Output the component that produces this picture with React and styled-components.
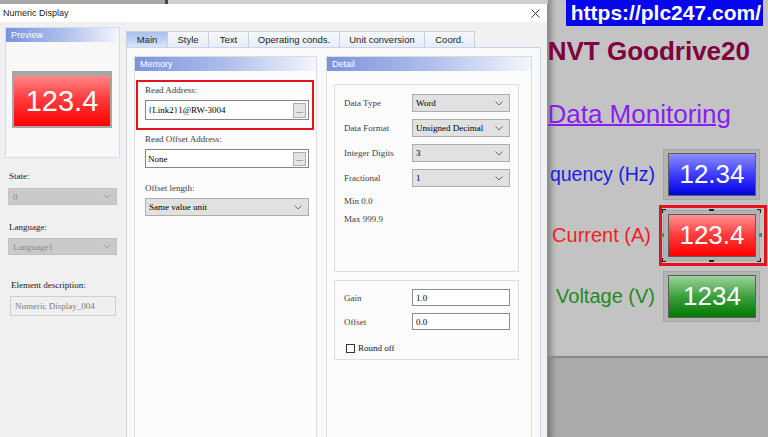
import React from 'react';
import styled, { createGlobalStyle, css } from 'styled-components';

const serif = `"Liberation Serif", "Times New Roman", serif`;
const sans = `"Liberation Sans", Arial, sans-serif`;

const GlobalStyle = createGlobalStyle`
  * { box-sizing: border-box; }
  html, body { margin: 0; padding: 0; }
  body { font-family: ${sans}; background: #c3c3c3; }
`;

const Desktop = styled.div`
  display: flex;
  width: 768px;
  height: 437px;
  overflow: hidden;
`;

/* ---------- dialog window ---------- */
const DialogColumn = styled.div`
  width: 548px;
  flex: none;
  display: flex;
  flex-direction: column;
`;

const BackdropStrip = styled.div`
  height: 4px;
  flex: none;
  background: linear-gradient(90deg, #a7a7a7 0, #a7a7a7 165px, #474747 165px, #474747 168px, #cfcfcf 168px);
`;

const Window = styled.div`
  flex: 1;
  min-height: 0;
  display: flex;
  flex-direction: column;
  background: #f1f1f1;
  border-right: 1px solid #8f8f8f;
`;

const TitleBar = styled.div`
  height: 18px;
  flex: none;
  display: flex;
  align-items: center;
  justify-content: space-between;
  padding: 0 7px 0 3px;
  background: #fff;
  font-size: 9px;
  color: #1b1b1b;
`;

const CloseIcon = styled.svg`
  display: block;
`;

const Body = styled.div`
  flex: 1;
  min-height: 0;
  display: flex;
`;

const SideColumn = styled.div`
  width: 125px;
  flex: none;
  display: flex;
  flex-direction: column;
  padding: 5px 0 0 5px;
  background: #f0f0f0;
`;

const PanelHeader = styled.div`
  height: 14px;
  flex: none;
  padding-left: 5px;
  line-height: 14px;
  font-size: 9px;
  color: #fff;
  background: linear-gradient(90deg, #7b93dc 0%, #aebeeb 50%, #f4f6fc 100%);
`;

const PreviewPanel = styled.div`
  width: 115px;
  height: 131px;
  display: flex;
  flex-direction: column;
  border: 1px solid #d2ddeb;
  background: #f8f8f8;
`;

const PreviewStage = styled.div`
  flex: 1;
  display: flex;
  align-items: center;
  justify-content: center;
  padding-right: 1px;
`;

const PreviewFrame = styled.div`
  width: 100px;
  height: 57px;
  display: flex;
  padding: 5px 2px 2px;
  background: #a6a6a6;
`;

const PreviewValue = styled.div`
  flex: 1;
  display: flex;
  align-items: center;
  justify-content: center;
  color: #fff;
  font-size: 29px;
  background: linear-gradient(180deg, #ff8585 0%, #ff3c3c 45%, #ff0000 100%);
`;

const SideLabel = styled.div`
  margin-top: ${p => p.$mt}px;
  padding-left: ${p => p.$indent}px;
  font-family: ${serif};
  font-size: 9px;
  line-height: 12px;
  color: #222;
`;

const DisabledSelect = styled.div`
  width: 109px;
  height: 17px;
  margin: ${p => p.$mt}px 0 0 3px;
  display: flex;
  align-items: center;
  justify-content: space-between;
  padding: 0 5px 0 4px;
  background: #cacaca;
  border: 1px solid #c2c2c2;
  font-family: ${serif};
  font-size: 9px;
  color: #8a8a8a;
`;

const ReadonlyInput = styled.div`
  width: 106px;
  height: 20px;
  margin: 5px 0 0 5px;
  display: flex;
  align-items: center;
  padding-left: 4px;
  background: #efefef;
  border: 1px solid #cfcfcf;
  font-family: ${serif};
  font-size: 9px;
  color: #7a7a7a;
`;

/* ---------- tabs ---------- */
const TabArea = styled.div`
  flex: 1;
  min-width: 0;
  display: flex;
  flex-direction: column;
  padding: 9px 6px 0 1px;
`;

const TabStrip = styled.div`
  height: 16px;
  flex: none;
  display: flex;
`;

const Tab = styled.div`
  width: ${p => p.$w}px;
  display: flex;
  align-items: center;
  justify-content: center;
  font-size: 9.5px;
  color: #1d1d1d;
  border: 1px solid #c5d1e3;
  border-bottom: none;
  background: ${p => (p.$active
    ? 'linear-gradient(180deg, #a9c0ee 0%, #c4d4f4 60%, #dbe5f8 100%)'
    : 'linear-gradient(180deg, #f5f8fc 0%, #e7edf6 100%)')};
  & + & { margin-left: -1px; }
`;

const ContentBox = styled.div`
  flex: 1;
  min-height: 0;
  display: flex;
  gap: 9px;
  padding: 8px 8px 0 7px;
  border: 1px solid #c7d6ec;
  border-bottom: none;
  background: #f9f9f9;
`;

const SectionPanel = styled.div`
  width: ${p => (p.$w ? `${p.$w}px` : 'auto')};
  flex: ${p => (p.$w ? 'none' : '1')};
  display: flex;
  flex-direction: column;
  border: 1px solid #dcdcdc;
  border-bottom: none;
  background: #fcfcfc;
`;

const MemoryBody = styled.div`
  display: flex;
  flex-direction: column;
  padding: 9px 2px 0 1px;
`;

const FieldGroup = styled.div`
  display: flex;
  flex-direction: column;
  margin-top: ${p => p.$mt || 0}px;
  ${p => (p.$highlight
    ? css`border: 2px solid #e3121e; padding: 2px 3px 8px 7px;`
    : css`padding: 3px 5px 0 9px;`)}
`;

const FieldLabel = styled.div`
  margin-bottom: 4px;
  font-family: ${serif};
  font-size: 9px;
  line-height: 12px;
  color: #3b3b3b;
`;

const AddressInput = styled.div`
  height: ${p => p.$h}px;
  display: flex;
  align-items: center;
  padding: 0 2px;
  background: #fff;
  border: 1px solid #858585;
  font-family: ${serif};
  font-size: 9px;
  color: #000;
  span { flex: 1; }
`;

const BrowseButton = styled.div`
  width: 13px;
  height: ${p => p.$h}px;
  display: flex;
  align-items: flex-end;
  justify-content: center;
  padding-bottom: 2px;
  background: #e3e3e3;
  border: 1px solid #acacac;
  font-size: 9px;
  line-height: 9px;
  color: #222;
`;

const DropSelect = styled.div`
  height: 18px;
  display: flex;
  align-items: center;
  justify-content: space-between;
  padding: 0 6px 0 3px;
  background: #e1e1e1;
  border: 1px solid #adadad;
  font-family: ${serif};
  font-size: 9px;
  color: #000;
`;

const DetailBody = styled.div`
  display: flex;
  flex-direction: column;
  gap: 8px;
  padding: 13px 12px 0 7px;
`;

const SettingsBox = styled.div`
  height: ${p => p.$h}px;
  display: flex;
  flex-direction: column;
  border: 1px solid #dedede;
  background: #fbfbfb;
`;

const SettingsGrid = styled.div`
  display: grid;
  grid-template-columns: 68px 1fr;
  align-items: center;
  row-gap: 7px;
  padding: ${p => p.$pt}px 8px 0 9px;
`;

const GridLabel = styled.div`
  font-family: ${serif};
  font-size: 9px;
  color: #3f3f3f;
`;

const NoteList = styled.div`
  display: flex;
  flex-direction: column;
  gap: 6px;
  margin-top: 8px;
  padding-left: 9px;
`;

const Note = styled.div`
  font-family: ${serif};
  font-size: 9px;
  line-height: 12px;
  color: #3f3f3f;
`;

const PlainInput = styled.div`
  height: 17px;
  display: flex;
  align-items: center;
  padding-left: 3px;
  background: #fff;
  border: 1px solid #8d8d8d;
  font-family: ${serif};
  font-size: 9px;
  color: #000;
`;

const CheckRow = styled.label`
  display: flex;
  align-items: center;
  margin-top: 12px;
  padding-left: 11px;
  font-family: ${serif};
  font-size: 9px;
  line-height: 12px;
  color: #111;
`;

const CheckBox = styled.span`
  width: 9px;
  height: 9px;
  margin-right: 3px;
  border: 1px solid #333;
  background: #fff;
`;

const ChevronSvg = styled.svg`
  display: block;
  flex: none;
`;

const Chevron = ({ color = '#666' }) => (
  <ChevronSvg width="8" height="5" viewBox="0 0 8 5">
    <polyline points="0.5,0.5 4,4 7.5,0.5" fill="none" stroke={color} strokeWidth="1" />
  </ChevronSvg>
);

/* ---------- HMI screen behind ---------- */
const HmiWindow = styled.div`
  flex: 1;
  min-width: 0;
  display: flex;
  flex-direction: column;
`;

const HmiScreen = styled.div`
  height: 358px;
  flex: none;
  display: flex;
  flex-direction: column;
  overflow: hidden;
  background: #c3c3c3;
  border-bottom: 2px solid #8b8b8b;
  box-shadow: inset 9px 0 7px -6px rgba(0, 0, 0, 0.35);
`;

const HmiBelow = styled.div`
  flex: 1;
  background: #ababab;
  box-shadow: inset 9px 0 7px -6px rgba(0, 0, 0, 0.35);
`;

const BannerRow = styled.div`
  display: flex;
  justify-content: flex-end;
  padding-right: 5px;
`;

const SiteBanner = styled.div`
  height: 26px;
  padding: 0 2px 0 5px;
  background: #0505f0;
  color: #fff;
  font-weight: bold;
  font-size: 21px;
  line-height: 26px;
  white-space: nowrap;
`;

const HmiTitle = styled.div`
  display: flex;
  justify-content: flex-end;
  margin-top: 10px;
  padding-right: 18px;
  font-weight: bold;
  font-size: 26px;
  line-height: 30px;
  color: #80003f;
  white-space: nowrap;
`;

const HmiLink = styled.div`
  display: flex;
  justify-content: flex-end;
  margin-top: 33px;
  padding-right: 37px;
  font-size: 26px;
  line-height: 30px;
  color: #8a1ef2;
  text-decoration: underline;
  text-decoration-thickness: 2px;
  white-space: nowrap;
`;

const ReadingList = styled.div`
  display: flex;
  flex-direction: column;
  margin-top: 15px;
`;

const ReadingRow = styled.div`
  height: 61px;
  display: flex;
  align-items: center;
  justify-content: flex-end;
  gap: 8px;
  padding-right: 8px;
`;

const ReadingLabel = styled.div`
  flex: none;
  font-size: ${p => p.$size}px;
  color: ${p => p.$color};
  white-space: nowrap;
`;

const ValueFrame = styled.div`
  width: 97px;
  height: 51px;
  flex: none;
  display: flex;
  padding: 3px 3px 3px 4px;
  background: #b3b3b3;
  border: 1px solid #a5a5a5;
`;

const tones = {
  blue: 'linear-gradient(180deg, #8e8eff 0%, #3d3dff 50%, #0000e0 100%)',
  red: 'linear-gradient(180deg, #ff9292 0%, #ff3a3a 50%, #ff0000 100%)',
  green: 'linear-gradient(180deg, #9bd39b 0%, #3f9f3f 50%, #007a00 100%)',
};

const ValueBox = styled.div`
  flex: 1;
  display: flex;
  align-items: center;
  justify-content: center;
  border: 1px solid #5d5d5d;
  background: ${p => tones[p.$tone]};
  color: #fff;
  font-size: 26px;
`;

const SelectionMark = styled.div`
  flex: none;
  margin-right: -7px;
  padding: 2px 4px 2px 1px;
  border: 3px solid #e3121e;
`;

const SelectionBody = styled.div`
  position: relative;
`;

const Handle = styled.span`
  position: absolute;
  width: ${p => p.$w}px;
  height: ${p => p.$h}px;
  left: ${p => p.$x}px;
  top: ${p => p.$y}px;
  background: ${p => (p.$green ? '#1fae1f' : '#222')};
`;

const handles = [
  { x: -1, y: -1, w: 4, h: 1 }, { x: -1, y: -1, w: 1, h: 4 },
  { x: 94, y: -1, w: 4, h: 1 }, { x: 97, y: -1, w: 1, h: 4 },
  { x: -1, y: 51, w: 4, h: 1 }, { x: -1, y: 48, w: 1, h: 4 },
  { x: 94, y: 51, w: 4, h: 1 }, { x: 97, y: 48, w: 1, h: 4 },
  { x: 46, y: -1, w: 5, h: 2 }, { x: 46, y: 50, w: 5, h: 2 },
  { x: -2, y: 23, w: 3, h: 4, green: true }, { x: 96, y: 23, w: 3, h: 4, green: true },
];

const tabs = [
  ['Main', 42], ['Style', 42], ['Text', 41],
  ['Operating conds.', 92], ['Unit conversion', 86], ['Coord.', 51],
];

const detailRows = [
  ['Data Type', 'Word'],
  ['Data Format', 'Unsigned Decimal'],
  ['Integer Digits', '3'],
  ['Fractional', '1'],
];

export default function App() {
  return (
    <>
      <GlobalStyle />
      <Desktop>
        <DialogColumn>
          <BackdropStrip />
          <Window>
            <TitleBar>
              <span>Numeric Display</span>
              <CloseIcon width="9" height="9" viewBox="0 0 9 9">
                <path d="M0.5 0.5 L8.5 8.5 M8.5 0.5 L0.5 8.5" stroke="#333" strokeWidth="1" />
              </CloseIcon>
            </TitleBar>
            <Body>
              <SideColumn>
                <PreviewPanel>
                  <PanelHeader>Preview</PanelHeader>
                  <PreviewStage>
                    <PreviewFrame>
                      <PreviewValue>123.4</PreviewValue>
                    </PreviewFrame>
                  </PreviewStage>
                </PreviewPanel>
                <SideLabel $mt={12} $indent={4}>State:</SideLabel>
                <DisabledSelect $mt={6}>
                  <span>0</span>
                  <Chevron color="#a0a0a0" />
                </DisabledSelect>
                <SideLabel $mt={16} $indent={4}>Language:</SideLabel>
                <DisabledSelect $mt={5}>
                  <span>Language1</span>
                  <Chevron color="#a0a0a0" />
                </DisabledSelect>
                <SideLabel $mt={24} $indent={6}>Element description:</SideLabel>
                <ReadonlyInput>Numeric Display_004</ReadonlyInput>
              </SideColumn>

              <TabArea>
                <TabStrip>
                  {tabs.map(([label, w], i) => (
                    <Tab key={label} $w={w} $active={i === 0}>{label}</Tab>
                  ))}
                </TabStrip>
                <ContentBox>
                  <SectionPanel $w={183}>
                    <PanelHeader>Memory</PanelHeader>
                    <MemoryBody>
                      <FieldGroup $highlight>
                        <FieldLabel>Read Address:</FieldLabel>
                        <AddressInput $h={20}>
                          <span>{'{Link2}1@RW-3004'}</span>
                          <BrowseButton $h={15}>...</BrowseButton>
                        </AddressInput>
                      </FieldGroup>
                      <FieldGroup>
                        <FieldLabel>Read Offset Address:</FieldLabel>
                        <AddressInput $h={19}>
                          <span>None</span>
                          <BrowseButton $h={14}>...</BrowseButton>
                        </AddressInput>
                      </FieldGroup>
                      <FieldGroup $mt={11}>
                        <FieldLabel>Offset length:</FieldLabel>
                        <DropSelect>
                          <span>Same value unit</span>
                          <Chevron color="#777" />
                        </DropSelect>
                      </FieldGroup>
                    </MemoryBody>
                  </SectionPanel>

                  <SectionPanel>
                    <PanelHeader>Detail</PanelHeader>
                    <DetailBody>
                      <SettingsBox $h={188}>
                        <SettingsGrid $pt={9}>
                          {detailRows.map(([label, value]) => (
                            <React.Fragment key={label}>
                              <GridLabel>{label}</GridLabel>
                              <DropSelect>
                                <span>{value}</span>
                                <Chevron color="#666" />
                              </DropSelect>
                            </React.Fragment>
                          ))}
                        </SettingsGrid>
                        <NoteList>
                          <Note>Min 0.0</Note>
                          <Note>Max 999.9</Note>
                        </NoteList>
                      </SettingsBox>
                      <SettingsBox $h={80}>
                        <SettingsGrid $pt={8}>
                          <GridLabel>Gain</GridLabel>
                          <PlainInput>1.0</PlainInput>
                          <GridLabel>Offset</GridLabel>
                          <PlainInput>0.0</PlainInput>
                        </SettingsGrid>
                        <CheckRow>
                          <CheckBox />
                          Round off
                        </CheckRow>
                      </SettingsBox>
                    </DetailBody>
                  </SectionPanel>
                </ContentBox>
              </TabArea>
            </Body>
          </Window>
        </DialogColumn>

        <HmiWindow>
          <HmiScreen>
            <BannerRow>
              <SiteBanner>https://plc247.com/</SiteBanner>
            </BannerRow>
            <HmiTitle>NVT Goodrive20</HmiTitle>
            <HmiLink>Data Monitoring</HmiLink>
            <ReadingList>
              <ReadingRow>
                <ReadingLabel $size={19.5} $color="#1c1ce8">quency (Hz)</ReadingLabel>
                <ValueFrame>
                  <ValueBox $tone="blue">12.34</ValueBox>
                </ValueFrame>
              </ReadingRow>
              <ReadingRow>
                <ReadingLabel $size={20} $color="#f51e1e">Current (A)</ReadingLabel>
                <SelectionMark>
                  <SelectionBody>
                    <ValueFrame>
                      <ValueBox $tone="red">123.4</ValueBox>
                    </ValueFrame>
                    {handles.map((h, i) => (
                      <Handle key={i} $x={h.x} $y={h.y} $w={h.w} $h={h.h} $green={h.green} />
                    ))}
                  </SelectionBody>
                </SelectionMark>
              </ReadingRow>
              <ReadingRow>
                <ReadingLabel $size={20} $color="#1f8a1f">Voltage (V)</ReadingLabel>
                <ValueFrame>
                  <ValueBox $tone="green">1234</ValueBox>
                </ValueFrame>
              </ReadingRow>
            </ReadingList>
          </HmiScreen>
          <HmiBelow />
        </HmiWindow>
      </Desktop>
    </>
  );
}
